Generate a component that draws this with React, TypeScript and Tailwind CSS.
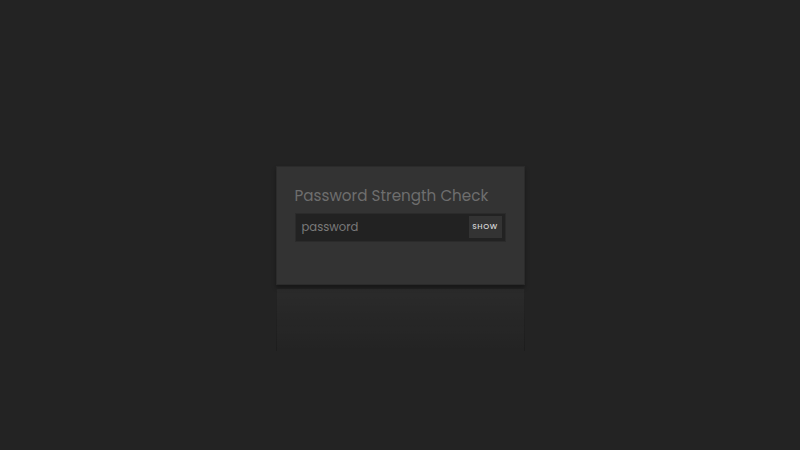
export default function App() {
  return (
    <div className="flex h-[450px] w-full items-center justify-center bg-[#232323] font-['Poppins','Inter',sans-serif]">
      <div className="relative">
        <div className="flex h-[119px] w-[249px] flex-col border border-[#2b2b2b] bg-[#333333] px-[18px] pt-[17px] shadow-[0_3px_4px_rgba(0,0,0,0.35)]">
          <h2 className="whitespace-nowrap text-[15.2px] leading-[24px] text-[#6e6e6e]">Password Strength Check</h2>
          <div className="mt-[5px] flex h-[29px] items-center justify-between border border-[#2b2b2b] bg-[#222222] pr-[3px] pl-[6px]">
            <span className="pt-px text-[11.6px] text-[#7a7a7a]">password</span>
            <button
              type="button"
              className="flex h-[22px] w-[33px] items-center justify-center bg-[#333333] text-[7.5px] font-medium tracking-[0.08em] text-[#d6d6d6]"
            >
              SHOW
            </button>
          </div>
        </div>
        {/* faded floor reflection under the card */}
        <div className="pointer-events-none absolute top-full left-0 mt-[4px] h-[62px] w-full border-x border-[rgba(0,0,0,0.15)] bg-gradient-to-b from-[rgba(255,255,255,0.035)] to-transparent" />
      </div>
    </div>
  );
}
